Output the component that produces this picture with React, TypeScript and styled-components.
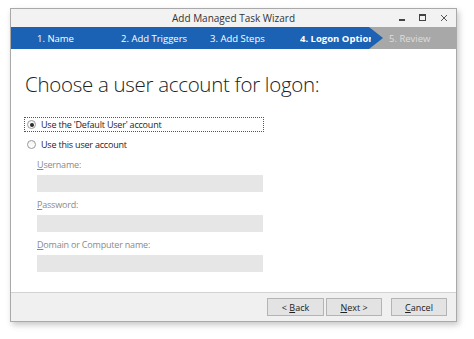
import React from "react";
import styled, { createGlobalStyle } from "styled-components";

const GlobalStyle = createGlobalStyle`
  html, body {
    margin: 0;
    padding: 0;
    background: #ffffff;
  }
  body {
    font-family: "Open Sans", "Noto Sans", sans-serif;
  }
`;

const Page = styled.div`
  padding: 8px 0 0 10px;
  width: 474px;
  height: 339px;
  box-sizing: border-box;
`;

const Window = styled.div`
  display: flex;
  flex-direction: column;
  width: 447px;
  height: 314px;
  box-sizing: border-box;
  border: 1px solid #a9a9a9;
  background: #ffffff;
  box-shadow: 2px 3px 6px rgba(0, 0, 0, 0.22);
`;

const TitleBar = styled.div`
  position: relative;
  height: 18px;
  display: flex;
  align-items: center;
  justify-content: center;
  background: #f2f2f2;
  font-size: 10px;
  color: #333333;
`;

const Controls = styled.div`
  position: absolute;
  right: 8px;
  top: 0;
  height: 18px;
  display: flex;
  align-items: center;
  gap: 13px;
`;

const StepBar = styled.div`
  display: flex;
  height: 22px;
  background: #a8a8a8;
  font-size: 9.5px;
  color: #ffffff;
`;

const Step = styled.div<{ $width: number; $pad: number; $active?: boolean; $todo?: boolean }>`
  flex: 0 0 ${(p) => p.$width}px;
  padding-left: ${(p) => p.$pad}px;
  box-sizing: border-box;
  display: flex;
  align-items: center;
  white-space: nowrap;
  overflow: hidden;
  background: ${(p) => (p.$todo ? "transparent" : "#1c62b4")};
  color: ${(p) => (p.$todo ? "#dedede" : "#ffffff")};
  font-weight: ${(p) => (p.$active ? 700 : 400)};
  clip-path: ${(p) =>
    p.$active
      ? "polygon(0 0, calc(100% - 14px) 0, 100% 50%, calc(100% - 14px) 100%, 0 100%)"
      : "none"};
`;

const StepLabel = styled.span<{ $max?: number }>`
  display: block;
  overflow: hidden;
  max-width: ${(p) => (p.$max ? `${p.$max}px` : "none")};
`;

const Content = styled.div`
  flex: 1;
  padding: 20px 0 0 14px;
  background: #ffffff;
`;

const Heading = styled.h1`
  margin: 0 0 19px 0;
  font-weight: 300;
  font-size: 20.5px;
  line-height: 30px;
  color: #222222;
  letter-spacing: -0.3px;
`;

const Option = styled.label<{ $focused?: boolean }>`
  display: flex;
  align-items: center;
  gap: 5px;
  width: 238px;
  height: 13px;
  box-sizing: border-box;
  padding-left: 2px;
  margin-bottom: 7px;
  font-size: 9px;
  letter-spacing: -0.2px;
  color: #1e1e1e;
  outline: ${(p) => (p.$focused ? "1px dotted #555" : "none")};
`;

const Radio = styled.span<{ $checked?: boolean }>`
  position: relative;
  width: 9px;
  height: 9px;
  border-radius: 50%;
  border: 1px solid #9a9a9a;
  background: linear-gradient(#f4f4f4, #ffffff);
  box-sizing: border-box;
  &::after {
    content: "";
    display: ${(p) => (p.$checked ? "block" : "none")};
    position: absolute;
    left: 1.5px;
    top: 1.5px;
    width: 4px;
    height: 4px;
    border-radius: 50%;
    background: #2a2a2a;
  }
`;

const Fields = styled.div`
  margin: 6px 0 0 12px;
  width: 226px;
`;

const Field = styled.div`
  display: flex;
  flex-direction: column;
  gap: 4px;
  margin-bottom: 6px;
`;

const FieldLabel = styled.div`
  font-size: 9px;
  letter-spacing: -0.2px;
  line-height: 13px;
  color: #8a8a8a;
  u {
    text-decoration: underline;
  }
`;

const Input = styled.div`
  height: 17px;
  background: #e6e6e6;
`;

const Footer = styled.div`
  height: 29px;
  border-top: 1px solid #d2d2d2;
  background: #f0f0f0;
  display: flex;
  justify-content: flex-end;
  align-items: flex-start;
  padding: 5px 9px 0 0;
  box-sizing: border-box;
`;

const Button = styled.button<{ $gap?: number; $width?: number }>`
  width: ${(p) => p.$width ?? 56}px;
  height: 18px;
  margin-left: ${(p) => p.$gap ?? 0}px;
  padding: 0;
  border: 1px solid #b4b4b4;
  background: #e3e3e3;
  font-family: "Open Sans", "Noto Sans", sans-serif;
  font-size: 9px;
  color: #222222;
`;

const Underline = styled.span`
  text-decoration: underline;
`;

const steps = [
  { label: "1. Name", width: 89, pad: 26 },
  { label: "2. Add Triggers", width: 104, pad: 21 },
  { label: "3. Add Steps", width: 64, pad: 6 },
];

export default function App() {
  return (
    <>
      <GlobalStyle />
      <Page>
        <Window>
          <TitleBar>
            Add Managed Task Wizard
            <Controls>
              <svg width="8" height="8" viewBox="0 0 8 8">
                <rect x="1" y="5" width="6" height="2" fill="#444" />
              </svg>
              <svg width="8" height="8" viewBox="0 0 8 8">
                <rect x="0.5" y="0.5" width="6" height="6" fill="none" stroke="#444" />
                <rect x="0.5" y="0.5" width="6" height="1.5" fill="#444" />
              </svg>
              <svg width="8" height="8" viewBox="0 0 8 8">
                <path d="M1 1 L7 7 M7 1 L1 7" stroke="#555" strokeWidth="1" />
              </svg>
            </Controls>
          </TitleBar>
          <StepBar>
            {steps.map((s) => (
              <Step key={s.label} $width={s.width} $pad={s.pad}>
                {s.label}
              </Step>
            ))}
            <Step $width={115} $pad={32} $active>
              <StepLabel $max={71}>4. Logon Options</StepLabel>
            </Step>
            <Step $width={73} $pad={6} $todo>
              5. Review
            </Step>
          </StepBar>
          <Content>
            <Heading>Choose a user account for logon:</Heading>
            <Option $focused>
              <Radio $checked />
              Use the 'Default User' account
            </Option>
            <Option>
              <Radio />
              Use this user account
            </Option>
            <Fields>
              <Field>
                <FieldLabel>
                  <u>U</u>sername:
                </FieldLabel>
                <Input />
              </Field>
              <Field>
                <FieldLabel>
                  <u>P</u>assword:
                </FieldLabel>
                <Input />
              </Field>
              <Field>
                <FieldLabel>
                  <u>D</u>omain or Computer name:
                </FieldLabel>
                <Input />
              </Field>
            </Fields>
          </Content>
          <Footer>
            <Button $width={57}>
              &lt; <Underline>B</Underline>ack
            </Button>
            <Button $gap={2}>
              <Underline>N</Underline>ext &gt;
            </Button>
            <Button $gap={9}>
              <Underline>C</Underline>ancel
            </Button>
          </Footer>
        </Window>
      </Page>
    </>
  );
}
